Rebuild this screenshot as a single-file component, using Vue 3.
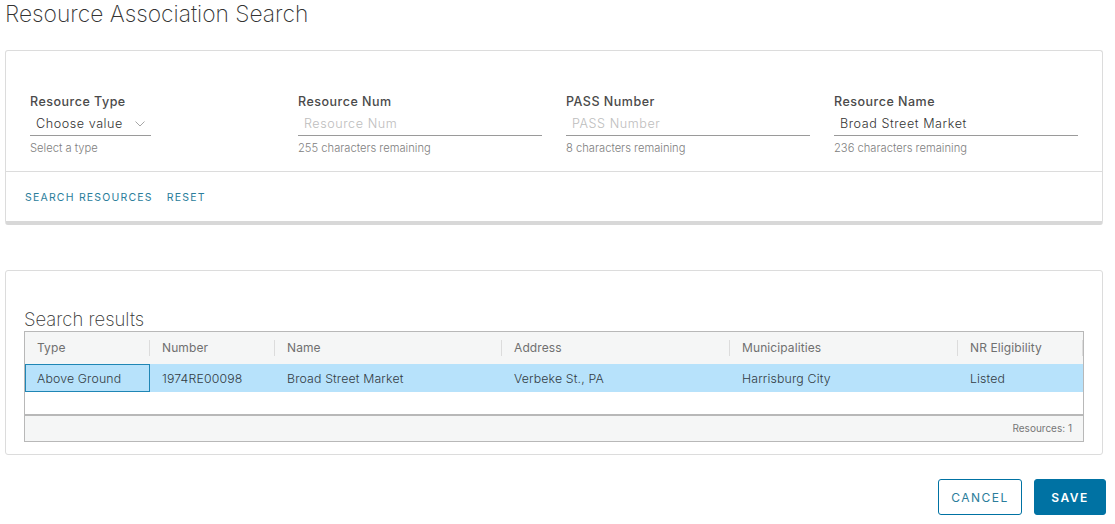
<template>
  <div class="page">
    <h1 class="title">Resource Association Search</h1>

    <section class="card search-card">
      <div class="fields">
        <div v-for="field in fields" :key="field.label" class="field">
          <label>{{ field.label }}</label>
          <div v-if="field.select" class="control select">
            <span>Choose value</span>
            <svg width="10" height="6" viewBox="0 0 10 6">
              <path d="M0.5 0.5 L5 5 L9.5 0.5" fill="none" stroke="#a6a6a6" stroke-width="1" />
            </svg>
          </div>
          <div v-else class="control" :class="{ empty: !field.value }">
            {{ field.value || field.label }}
          </div>
          <small>{{ field.help }}</small>
        </div>
      </div>
      <div class="actions">
        <a>SEARCH RESOURCES</a>
        <a>RESET</a>
      </div>
    </section>

    <section class="card results-card">
      <h2>Search results</h2>
      <div class="grid">
        <div class="row head">
          <div v-for="col in columns" :key="col.name" class="cell" :style="{ width: col.width + 'px' }">
            {{ col.name }}
          </div>
        </div>
        <div class="row selected">
          <div
            v-for="(col, idx) in columns"
            :key="col.name"
            class="cell"
            :class="{ focused: idx === 0 }"
            :style="{ width: col.width + 'px' }"
          >
            {{ col.value }}
          </div>
        </div>
        <div class="filler"></div>
        <div class="grid-footer">Resources: 1</div>
      </div>
    </section>

    <div class="buttons">
      <button class="btn outline">CANCEL</button>
      <button class="btn solid">SAVE</button>
    </div>
  </div>
</template>

<script setup>
const fields = [
  { label: 'Resource Type', select: true, help: 'Select a type' },
  { label: 'Resource Num', value: '', help: '255 characters remaining' },
  { label: 'PASS Number', value: '', help: '8 characters remaining' },
  { label: 'Resource Name', value: 'Broad Street Market', help: '236 characters remaining' }
]

const columns = [
  { name: 'Type', value: 'Above Ground', width: 125 },
  { name: 'Number', value: '1974RE00098', width: 125 },
  { name: 'Name', value: 'Broad Street Market', width: 227 },
  { name: 'Address', value: 'Verbeke St., PA', width: 228 },
  { name: 'Municipalities', value: 'Harrisburg City', width: 228 },
  { name: 'NR Eligibility', value: 'Listed', width: 125 }
]
</script>

<style scoped>
.page {
  width: 1115px;
  height: 524px;
  overflow: hidden;
  box-sizing: border-box;
  padding-left: 5px;
  font-family: Inter, "Liberation Sans", sans-serif;
  color: #565656;
  background: #fff;
}

.title {
  margin: 0;
  height: 50px;
  font-size: 22.8px;
  line-height: 27px;
  font-weight: 200;
  color: #333;
}

.card {
  width: 1098px;
  box-sizing: border-box;
  border: 1px solid #dcdcdc;
  border-radius: 3px;
  background: #fff;
}

.search-card {
  height: 175px;
  border-bottom: 4px solid #d8d8d8;
}

.fields {
  display: flex;
  gap: 24px;
  height: 121px;
  box-sizing: border-box;
  padding: 43px 0 0 24px;
  border-bottom: 1px solid #dcdcdc;
}

.field {
  width: 244px;
  display: flex;
  flex-direction: column;
}

.field label {
  font-size: 12.5px;
  line-height: 15px;
  letter-spacing: 0.5px;
  font-weight: 500;
  color: #4a4a4a;
}

.control {
  height: 24px;
  line-height: 23px;
  margin-top: 3px;
  box-sizing: border-box;
  padding-left: 6px;
  font-size: 12.6px;
  letter-spacing: 0.55px;
  font-weight: 300;
  color: #333;
  border-bottom: 1px solid #9a9a9a;
}

.control.empty {
  color: #bdbdbd;
}

.select {
  width: 121px;
  display: flex;
  align-items: center;
  justify-content: space-between;
  padding-right: 6px;
}

.field small {
  margin-top: 5px;
  font-size: 11.2px;
  line-height: 14px;
  font-weight: 300;
  color: #808080;
}

.actions {
  display: flex;
  gap: 14px;
  padding: 19px 0 0 19px;
}

.actions a {
  font-size: 10.5px;
  line-height: 14px;
  letter-spacing: 1.2px;
  color: #2b7d9b;
}

.results-card {
  margin-top: 45px;
  height: 185px;
  padding: 37px 18px 0;
}

.results-card h2 {
  margin: 0 0 1px;
  font-size: 18.5px;
  line-height: 22px;
  font-weight: 200;
  color: #333;
}

.grid {
  width: 1060px;
  height: 111px;
  box-sizing: border-box;
  border: 1px solid #b8b8b8;
  display: flex;
  flex-direction: column;
  font-size: 12.3px;
  letter-spacing: 0.15px;
  font-weight: 300;
}

.row {
  display: flex;
  width: 100%;
}

.head {
  height: 32px;
  flex: none;
  background: #f5f6f6;
  color: #707070;
  font-size: 12px;
  letter-spacing: 0.1px;
  font-weight: 400;
}

.head .cell {
  position: relative;
  line-height: 31px;
  padding-left: 12px;
  box-sizing: border-box;
}

.head .cell::after {
  content: "";
  position: absolute;
  right: 0;
  top: 8px;
  height: 16px;
  width: 1px;
  background: #dcdcdc;
}

.selected {
  height: 28px;
  flex: none;
  background: #b7e2fb;
  color: #333c44;
}

.selected .cell {
  line-height: 29px;
  padding-left: 12px;
  box-sizing: border-box;
}

.selected .focused {
  border: 1px solid #1f86b5;
  padding-left: 11px;
  line-height: 27px;
}

.filler {
  flex: 1;
  border-bottom: 2px solid #b8b8b8;
}

.grid-footer {
  height: 25px;
  flex: none;
  background: #f5f6f6;
  text-align: right;
  padding-right: 11px;
  font-size: 10px;
  letter-spacing: 0;
  line-height: 24px;
  color: #777;
  font-weight: 400;
}

.buttons {
  display: flex;
  justify-content: flex-end;
  gap: 12px;
  width: 1101px;
  margin-top: 24px;
}

.btn {
  height: 36px;
  box-sizing: border-box;
  border-radius: 3px;
  font-family: inherit;
  font-size: 12px;
  letter-spacing: 1.5px;
  padding: 0;
}

.outline {
  width: 84px;
  border: 1px solid #0072a3;
  background: #fff;
  color: #2b7d9b;
}

.solid {
  width: 72px;
  border: 1px solid #0072a3;
  background: #0072a3;
  color: #fff;
  font-weight: 600;
}
</style>
